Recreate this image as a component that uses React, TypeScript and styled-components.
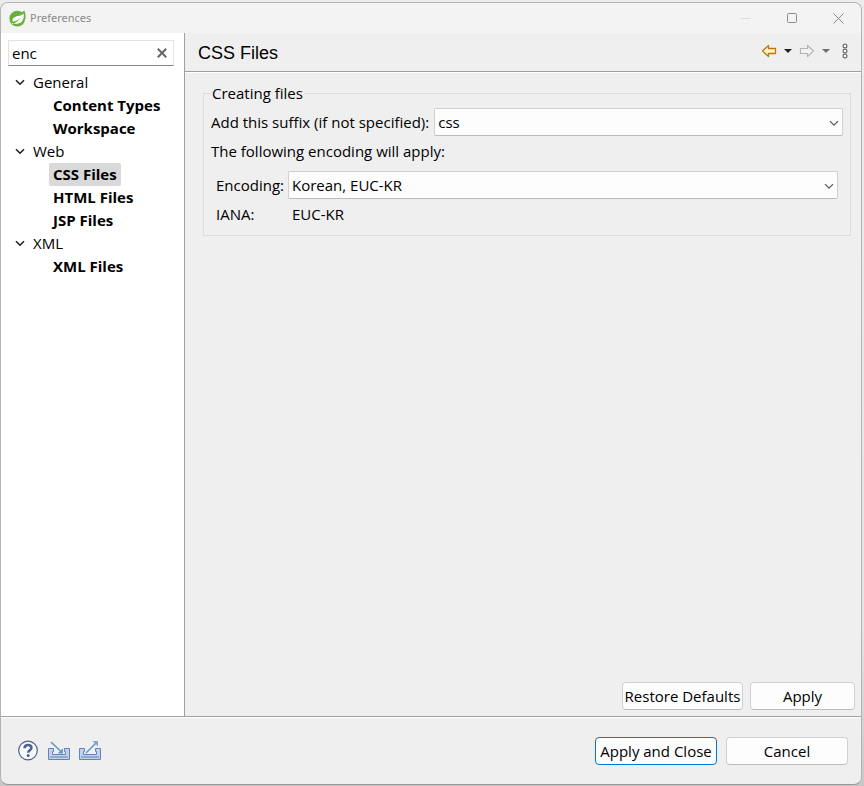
import React, { useState } from 'react';
import styled, { createGlobalStyle } from 'styled-components';

const GlobalStyle = createGlobalStyle`
  *, *::before, *::after { box-sizing: border-box; }
  body { margin: 0; background: #dcdcdc; }
  body, button, input, select {
    font-family: "Open Sans", "Noto Sans CJK KR", sans-serif;
    font-size: 15px;
    color: #000;
  }
`;

const Desktop = styled.div`
  display: flex;
  min-height: 100vh;
  padding: 2px 2px 1px 0;
  background: linear-gradient(#ececec, #e4e4e4 80%, #c8c8c8);
`;

const Dialog = styled.div`
  flex: 1;
  display: flex;
  flex-direction: column;
  min-width: 0;
  overflow: hidden;
  background: #efefef;
  border: 1px solid #b4b4b4;
  border-bottom-color: #969696;
  border-radius: 8px;
`;

const TitleBar = styled.header`
  display: flex;
  align-items: center;
  height: 30px;
  padding: 0 2px 0 8px;
  gap: 4px;
  background: #f3f3f3;
`;

const WindowTitle = styled.h1`
  flex: 1;
  margin: 0;
  font-family: "Noto Sans", sans-serif;
  font-size: 11px;
  font-weight: 400;
  line-height: 16px;
  color: #8a8a8a;
`;

const CaptionButton = styled.button`
  display: flex;
  align-items: center;
  justify-content: center;
  width: 42px;
  height: 28px;
  padding: 0;
  border: 0;
  background: none;
`;

const Body = styled.div`
  flex: 1;
  display: flex;
  border-bottom: 1px solid #a0a0a0;
  box-shadow: 0 1px #fff;
`;

const Sidebar = styled.aside`
  flex: none;
  width: 184px;
  padding: 7px 10px 8px 7px;
  background: #fff;
  border-right: 1px solid #a0a0a0;
`;

const FilterBox = styled.div`
  display: flex;
  align-items: center;
  height: 26px;
  border: 1px solid #e3e3e3;
  border-bottom-color: #868686;
`;

const FilterInput = styled.input`
  flex: 1;
  min-width: 0;
  padding: 0 3px;
  border: 0;
  outline: 0;
  background: none;
`;

const IconButton = styled.button<{ $width?: number }>`
  display: flex;
  align-items: center;
  justify-content: center;
  width: ${({ $width }) => $width ?? 22}px;
  height: 22px;
  padding: 0;
  border: 0;
  background: none;
`;

const Tree = styled.ul`
  margin: 5px 0 0;
  padding: 0;
  list-style: none;
`;

const Branch = styled.ul`
  margin: 0;
  padding: 0 0 0 41px;
  list-style: none;
`;

const GroupButton = styled.button`
  display: flex;
  align-items: center;
  gap: 8px;
  height: 23px;
  padding: 0 0 1px 7px;
  border: 0;
  line-height: 22px;
  background: none;
`;

const PageButton = styled.button<{ $selected: boolean }>`
  display: block;
  height: 23px;
  padding: 0 4px;
  border: 0;
  border-radius: 2px;
  font-weight: 700;
  line-height: 23px;
  white-space: nowrap;
  background: ${({ $selected }) => ($selected ? '#d9d9d9' : 'transparent')};
`;

const Page = styled.main`
  flex: 1;
  display: flex;
  flex-direction: column;
  min-width: 0;
`;

const PageHeader = styled.div`
  display: flex;
  align-items: center;
  height: 39px;
  padding: 0 5px 2px 13px;
  border-bottom: 1px solid #a0a0a0;
  box-shadow: 0 1px #fff;
`;

const PageTitle = styled.h2`
  flex: 1;
  margin: 0;
  padding-top: 4px;
  font-family: "Liberation Sans", Arial, sans-serif;
  font-size: 18px;
  font-weight: 400;
`;

const PageContent = styled.div`
  flex: 1;
  padding: 11px 10px 0 18px;
`;

const Group = styled.fieldset`
  min-width: 0;
  margin: 0;
  padding: 5px 7px 7px;
  border: 1px solid #dcdcdc;
`;

const Legend = styled.legend`
  padding: 0 1px;
  line-height: 20px;
`;

const Row = styled.div`
  display: flex;
  align-items: center;
  gap: 5px;
`;

const Note = styled.p`
  margin: 0;
  line-height: 30px;
`;

const EncodingGrid = styled.div`
  display: grid;
  grid-template-columns: auto 1fr;
  align-items: center;
  gap: 1px 4px;
  padding: 5px 5px 0;
`;

const CaptionLabel = styled.label`
  line-height: 28px;
`;

const Value = styled.output`
  padding: 0 4px;
  line-height: 28px;
`;

const SelectWrap = styled.div`
  position: relative;
  flex: 1;
  min-width: 0;
  svg {
    position: absolute;
    right: 4px;
    top: 12px;
    pointer-events: none;
  }
`;

const Select = styled.select`
  display: block;
  appearance: none;
  width: 100%;
  height: 28px;
  padding: 0 20px 0 3px;
  border: 1px solid #d0d0d0;
  border-bottom-color: #bcbcbc;
  border-radius: 2px;
  background: #fdfdfd;
`;

const Actions = styled.div`
  display: flex;
  justify-content: flex-end;
  gap: 7px;
  padding: 0 6px 6px;
`;

const PushButton = styled.button<{ $width: number; $primary?: boolean }>`
  width: ${({ $width }) => $width}px;
  height: 28px;
  padding: 0;
  border: 1px solid ${({ $primary }) => ($primary ? '#0078d4' : '#d0d0d0')};
  border-bottom-color: ${({ $primary }) => ($primary ? '#0078d4' : '#bcbcbc')};
  border-radius: 4px;
  background: #fdfdfd;
  white-space: nowrap;
`;

const Footer = styled.footer`
  display: flex;
  align-items: center;
  justify-content: space-between;
  height: 67px;
  padding: 0 13px 0 16px;
`;

const ButtonRow = styled.div<{ $gap: number }>`
  display: flex;
  gap: ${({ $gap }) => $gap}px;
`;

const Chevron = ({ color = '#222', width = 1.6 }: { color?: string; width?: number }) => (
  <svg width="10" height="7" viewBox="0 0 10 7" fill="none" stroke={color} strokeWidth={width}>
    <path d="M1 1.2 5 5.2 9 1.2" />
  </svg>
);

const Logo = () => (
  <svg width="17" height="17" viewBox="0 0 17 17">
    <circle cx="8.300" cy="8.600" r="7.900" fill="#68b13c" />
    <path d="M12 3 15.300 .6C16.500 3 17 6 16.200 9Z" fill="#68b13c" />
    <path
      fill="#fff"
      d="M14.600 3.600C12.600 6 9 5.800 6.500 6.800 4 7.800 3 9.800 3.500 11.600c3-.2 5.700-1.500 8-3.900-1.700 2.900-4.200 4.700-7 5.500 3.200 1.200 7 .6 8.800-2.100C14.700 8.900 15.100 6.300 14.600 3.600Z"
    />
    <circle cx="3.600" cy="13.600" r=".7" fill="#fff" />
  </svg>
);

const ARROW = 'M1.500 7 7.500 1.500V4.500H14.500V9.500H7.500V12.500Z';

const BackIcon = () => (
  <svg width="16" height="14" viewBox="0 0 16 14">
    <path d={ARROW} fill="#fff3c4" stroke="#b9790f" strokeWidth="1.300" strokeLinejoin="round" />
  </svg>
);

const ForwardIcon = () => (
  <svg width="16" height="14" viewBox="0 0 16 14">
    <path d={ARROW} transform="matrix(-1 0 0 1 16 0)" fill="#f4f4f4" stroke="#b4b4b4" strokeWidth="1.200" strokeLinejoin="round" />
  </svg>
);

const Caret = ({ color }: { color: string }) => (
  <svg width="8" height="4" viewBox="0 0 8 4">
    <path d="M0 0H8L4 4Z" fill={color} />
  </svg>
);

const MenuIcon = () => (
  <svg width="6" height="16" viewBox="0 0 6 16" fill="#fff" stroke="#6e6e6e" strokeWidth="1.200">
    <circle cx="3" cy="3" r="1.900" />
    <circle cx="3" cy="8" r="1.900" />
    <circle cx="3" cy="13" r="1.900" />
  </svg>
);

const HelpIcon = () => (
  <svg width="22" height="22" viewBox="0 0 22 22" fill="none">
    <circle cx="11" cy="10.500" r="9.300" fill="#f6f8fb" stroke="#50628c" strokeWidth="1.200" />
    <path d="M7.600 8.200C7.600 4 14.400 4 14.400 7.700 14.400 10.200 11.200 10.200 11.200 12.800" stroke="#50628c" strokeWidth="2.600" />
    <circle cx="11.200" cy="15.600" r="1.500" fill="#50628c" />
  </svg>
);

const TRAY = 'M.5 7.500H5.500V10.500H4.500V13.500H17.500V10.500H16.500V7.500H21.500V18.500H.5Z';

const Tray = () => (
  <>
    <path d={TRAY} fill="#c3d2ec" stroke="#6682b4" />
    <path d="M2 15H20V17H2Z" fill="#8fa9d6" />
  </>
);

const ImportIcon = () => (
  <svg width="22" height="20" viewBox="0 0 22 20" fill="none">
    <Tray />
    <path d="M3 1 13.500 11" stroke="#5b9cc4" strokeWidth="1.600" />
    <path d="M15 7.500V12.500H9.500Z" fill="#5b9cc4" />
  </svg>
);

const ExportIcon = () => (
  <svg width="22" height="20" viewBox="0 0 22 20" fill="none">
    <Tray />
    <path d="M7 12 17 2" stroke="#5b9cc4" strokeWidth="1.600" />
    <path d="M13.500 0H19V5.500Z" fill="#79acd0" />
  </svg>
);

const groups = [
  { name: 'General', pages: ['Content Types', 'Workspace'] },
  { name: 'Web', pages: ['CSS Files', 'HTML Files', 'JSP Files'] },
  { name: 'XML', pages: ['XML Files'] },
];

export default function App() {
  const [filter, setFilter] = useState('enc');
  const [selected, setSelected] = useState('CSS Files');

  return (
    <Desktop>
      <GlobalStyle />
      <Dialog role="dialog" aria-label="Preferences">
        <TitleBar>
          <Logo />
          <WindowTitle>Preferences</WindowTitle>
          <ButtonRow $gap={4}>
            <CaptionButton aria-label="Minimize">
              <svg width="10" height="10" stroke="#dadada"><path d="M0 5.500H10" /></svg>
            </CaptionButton>
            <CaptionButton aria-label="Maximize">
              <svg width="11" height="11" fill="none" stroke="#8a8a8a"><rect x=".5" y=".5" width="9" height="9" rx="1" /></svg>
            </CaptionButton>
            <CaptionButton aria-label="Close">
              <svg width="11" height="11" stroke="#8a8a8a"><path d="M.5 .5 10.500 10.500M10.500 .5 .5 10.500" /></svg>
            </CaptionButton>
          </ButtonRow>
        </TitleBar>

        <Body>
          <Sidebar>
            <FilterBox>
              <FilterInput aria-label="Filter" value={filter} onChange={(e) => setFilter(e.target.value)} />
              <IconButton aria-label="Clear filter" onClick={() => setFilter('')}>
                <svg width="10" height="10" stroke="#666" strokeWidth="2"><path d="M.8 .8 9.200 9.200M9.200 .8 .8 9.200" /></svg>
              </IconButton>
            </FilterBox>
            <Tree>
              {groups.map((group) => (
                <li key={group.name}>
                  <GroupButton aria-expanded="true">
                    <Chevron />
                    {group.name}
                  </GroupButton>
                  <Branch>
                    {group.pages.map((page) => (
                      <li key={page}>
                        <PageButton $selected={page === selected} onClick={() => setSelected(page)}>
                          {page}
                        </PageButton>
                      </li>
                    ))}
                  </Branch>
                </li>
              ))}
            </Tree>
          </Sidebar>

          <Page>
            <PageHeader>
              <PageTitle>CSS Files</PageTitle>
              <IconButton aria-label="Back" $width={22}><BackIcon /></IconButton>
              <IconButton aria-label="Back history" $width={16}><Caret color="#222" /></IconButton>
              <IconButton aria-label="Forward" $width={22}><ForwardIcon /></IconButton>
              <IconButton aria-label="Forward history" $width={16}><Caret color="#6e6e6e" /></IconButton>
              <IconButton aria-label="View menu" $width={22}><MenuIcon /></IconButton>
            </PageHeader>
            <PageContent>
              <Group>
                <Legend>Creating files</Legend>
                <Row>
                  <CaptionLabel htmlFor="suffix">Add this suffix (if not specified):</CaptionLabel>
                  <SelectWrap>
                    <Select id="suffix"><option>css</option></Select>
                    <Chevron color="#555" width={1.2} />
                  </SelectWrap>
                </Row>
                <Note>The following encoding will apply:</Note>
                <EncodingGrid>
                  <CaptionLabel htmlFor="encoding">Encoding:</CaptionLabel>
                  <SelectWrap>
                    <Select id="encoding"><option>Korean, EUC-KR</option></Select>
                    <Chevron color="#555" width={1.2} />
                  </SelectWrap>
                  <CaptionLabel htmlFor="iana">IANA:</CaptionLabel>
                  <Value id="iana">EUC-KR</Value>
                </EncodingGrid>
              </Group>
            </PageContent>
            <Actions>
              <PushButton $width={121}>Restore Defaults</PushButton>
              <PushButton $width={105}>Apply</PushButton>
            </Actions>
          </Page>
        </Body>

        <Footer>
          <ButtonRow $gap={9}>
            <IconButton aria-label="Help"><HelpIcon /></IconButton>
            <IconButton aria-label="Import preferences"><ImportIcon /></IconButton>
            <IconButton aria-label="Export preferences"><ExportIcon /></IconButton>
          </ButtonRow>
          <ButtonRow $gap={9}>
            <PushButton $width={122} $primary>Apply and Close</PushButton>
            <PushButton $width={122}>Cancel</PushButton>
          </ButtonRow>
        </Footer>
      </Dialog>
    </Desktop>
  );
}
